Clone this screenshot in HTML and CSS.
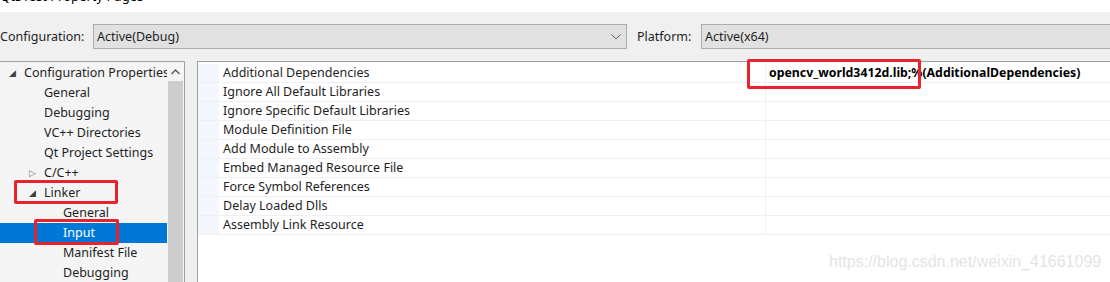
FILE: index.html
```html
<!DOCTYPE html>
<html lang="en">
<head>
    <meta charset="UTF-8">
    <title>Qt5Test Property Pages</title>
    <link rel="stylesheet" href="styles.css">
</head>
<body>
    <div class="titlebar"><span>Qt5Test Property Pages</span></div>

    <div class="toolbar">
        <label class="tb-label">Configuration:</label>
        <div class="combo combo-config">
            <span>Active(Debug)</span>
            <svg class="chev" width="10" height="6" viewBox="0 0 10 6"><path d="M0.5 0.5 L5 5 L9.5 0.5" fill="none" stroke="#606060" stroke-width="1"/></svg>
        </div>
        <label class="tb-label platform">Platform:</label>
        <div class="combo combo-platform">
            <span>Active(x64)</span>
        </div>
    </div>

    <div class="main">
        <div class="tree">
            <ul class="tree-list">
                <li class="lvl0"><span class="arrow open">&#9698;</span>Configuration Properties</li>
                <li class="lvl1">General</li>
                <li class="lvl1">Debugging</li>
                <li class="lvl1">VC++ Directories</li>
                <li class="lvl1">Qt Project Settings</li>
                <li class="lvl1 has-arrow"><span class="arrow closed">&#9655;</span>C/C++</li>
                <li class="lvl1 has-arrow"><span class="arrow open">&#9698;</span>Linker</li>
                <li class="lvl2">General</li>
                <li class="lvl2 selected">Input</li>
                <li class="lvl2">Manifest File</li>
                <li class="lvl2">Debugging</li>
            </ul>
            <div class="scrollbar">
                <svg class="up" width="9" height="6" viewBox="0 0 9 6"><path d="M0.5 5 L4.5 1 L8.5 5" fill="none" stroke="#606060" stroke-width="1.5"/></svg>
                <div class="thumb"></div>
            </div>
        </div>

        <div class="grid">
            <div class="row"><div class="gutter"></div><div class="name">Additional Dependencies</div><div class="value bold">opencv_world3412d.lib;%(AdditionalDependencies)</div></div>
            <div class="row"><div class="gutter"></div><div class="name">Ignore All Default Libraries</div><div class="value"></div></div>
            <div class="row"><div class="gutter"></div><div class="name">Ignore Specific Default Libraries</div><div class="value"></div></div>
            <div class="row"><div class="gutter"></div><div class="name">Module Definition File</div><div class="value"></div></div>
            <div class="row"><div class="gutter"></div><div class="name">Add Module to Assembly</div><div class="value"></div></div>
            <div class="row"><div class="gutter"></div><div class="name">Embed Managed Resource File</div><div class="value"></div></div>
            <div class="row"><div class="gutter"></div><div class="name">Force Symbol References</div><div class="value"></div></div>
            <div class="row"><div class="gutter"></div><div class="name">Delay Loaded Dlls</div><div class="value"></div></div>
            <div class="row"><div class="gutter"></div><div class="name">Assembly Link Resource</div><div class="value"></div></div>
        </div>
    </div>

    <!-- red highlight boxes drawn over the screenshot -->
    <div class="mark mark-value"></div>
    <div class="mark mark-linker"></div>
    <div class="mark mark-input"></div>

    <div class="watermark">https://blog.csdn.net/weixin_41661099</div>
</body>
</html>
```

FILE: styles.css
```css
* {
    margin: 0;
    padding: 0;
    box-sizing: border-box;
}

body {
    width: 1110px;
    height: 282px;
    overflow: hidden;
    background-color: #f0f0f0;
    font-family: "Noto Sans", "Open Sans", sans-serif;
    font-size: 12.5px;
    color: #1e1e1e;
    position: relative;
}

.titlebar {
    height: 12px;
    background-color: #ffffff;
    overflow: hidden;
}
.titlebar span {
    display: block;
    margin-top: -14px;
    font-size: 13px;
    line-height: 20px;
    color: #000;
}

.toolbar {
    display: flex;
    align-items: center;
    height: 49px;
    white-space: nowrap;
}
.tb-label {
    width: 93px;
    flex-shrink: 0;
}
.tb-label.platform {
    width: 64px;
    margin-left: 10px;
}
.combo {
    height: 25px;
    background-color: #e1e1e1;
    border: 1px solid #adadad;
    display: flex;
    align-items: center;
    padding-left: 3px;
    flex-shrink: 0;
}
.combo-config {
    width: 534px;
    justify-content: space-between;
    padding-right: 5px;
}
.combo-platform {
    width: 420px;
    border-right: none;
}

.main {
    display: flex;
    height: 221px;
}

.tree {
    width: 185px;
    display: flex;
    background-color: #f5f5f5;
    border-top: 1px solid #a0a0a0;
    border-right: 1px solid #a0a0a0;
}
.tree-list {
    list-style: none;
    width: 167px;
    padding-top: 1px;
}
.tree-list li {
    height: 20px;
    line-height: 20px;
    white-space: nowrap;
    overflow: hidden;
}
.lvl0 { padding-left: 9px; }
.lvl1 { padding-left: 44px; }
.lvl1.has-arrow { padding-left: 29px; }
.lvl2 { padding-left: 63px; }
.arrow {
    display: inline-block;
    width: 15px;
    font-size: 9px;
    color: #404040;
    vertical-align: top;
}
.arrow.closed {
    color: #707070;
}
.tree-list li.selected {
    background-color: #0078d7;
    color: #ffffff;
}

.scrollbar {
    width: 16px;
    display: flex;
    flex-direction: column;
    align-items: center;
}
.scrollbar .up {
    margin-top: 7px;
    margin-bottom: 6px;
}
.thumb {
    width: 15px;
    flex: 1;
    background-color: #cdcdcd;
}

.grid {
    margin-left: 12px;
    flex: 1;
    background-color: #ffffff;
    border-top: 1px solid #a0a0a0;
    border-left: 1px solid #a0a0a0;
    padding-top: 2px;
}
.row {
    display: flex;
    height: 19px;
    border-bottom: 1px solid #eef0f6;
}
.gutter {
    width: 21px;
    background-color: #f4f7fc;
}
.name {
    width: 547px;
    padding-left: 4px;
    line-height: 18px;
    border-right: 1px solid #eef0f6;
    white-space: nowrap;
}
.value {
    flex: 1;
    padding-left: 3px;
    line-height: 18px;
    white-space: nowrap;
}
.value.bold {
    font-weight: bold;
    font-size: 12.3px;
    color: #000;
}

.mark {
    position: absolute;
    border: 3px solid #e8232d;
    border-radius: 2px;
}
.mark-value { left: 747px; top: 59px; width: 174px; height: 30px; }
.mark-linker { left: 14px; top: 180px; width: 104px; height: 24px; }
.mark-input { left: 34px; top: 219px; width: 85px; height: 26px; }

.watermark {
    position: absolute;
    left: 829px;
    top: 253px;
    font-family: "Liberation Sans", Arial, sans-serif;
    font-size: 16px;
    color: rgba(200, 200, 200, 0.5);
}
```
